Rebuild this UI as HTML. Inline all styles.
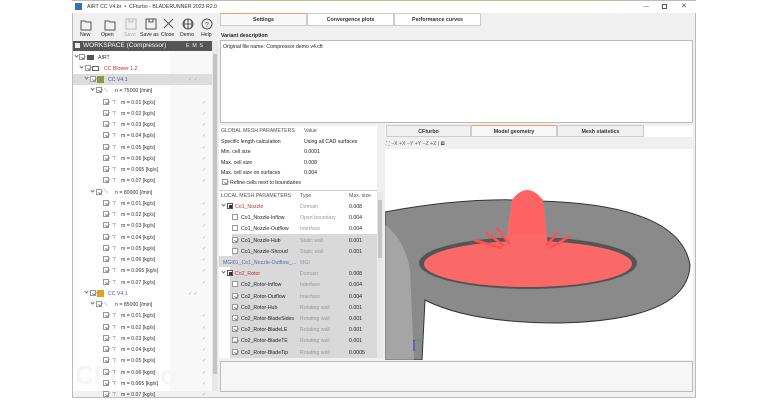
<!DOCTYPE html>
<html><head><meta charset="utf-8"><style>
*{margin:0;padding:0;box-sizing:border-box}
body{width:768px;height:402px;background:#fff;position:relative;overflow:hidden;font-family:"Liberation Sans",sans-serif;color:#222}
.a{position:absolute;white-space:nowrap}
.t{font-size:5.2px;line-height:6px}
.cb{position:absolute;width:6px;height:6px;border:0.6px solid #999;background:#fff}
.ck::after{content:"";position:absolute;left:1.5px;top:0.2px;width:1.6px;height:3px;border-right:0.6px solid #888;border-bottom:0.6px solid #888;transform:rotate(40deg)}
.chev{position:absolute;width:3px;height:3px;border-right:0.6px solid #777;border-bottom:0.6px solid #777;transform:rotate(45deg)}
.tab{position:absolute;background:#f0f0f0;border:0.6px solid #ccc;font-size:5.3px;font-weight:bold;text-align:center;line-height:12px;color:#333}
.tick{position:absolute;font-size:5px;color:#aaa}
</style></head><body>
<div class="a" style="left:72px;top:0;width:624px;height:398px;background:#f0f0f0;border:0.6px solid #bbb"></div>
<div class="a" style="left:250px;top:0;width:370px;height:1px;background:#c9b98a"></div>
<div class="a" style="left:72px;top:1px;width:624px;height:12px;background:#fff"></div>
<div class="a" style="left:75px;top:3px;width:7px;height:7px;background:#3b6fb0"></div>
<div class="a t" style="left:87px;top:4px;color:#333">AIRT CC V4.br &nbsp;•&nbsp; CFturbo - BLADERUNNER 2023 R2.0</div>
<div class="a" style="left:643px;top:4px;font-size:6px;color:#555">—</div>
<div class="a" style="left:662px;top:4px;width:5px;height:5px;border:0.7px solid #555"></div>
<div class="a" style="left:681px;top:2px;font-size:7px;color:#555">✕</div>
<svg class="a" style="left:74px;top:15px" width="145" height="18" viewBox="0 0 145 18" fill="none" stroke="#555" stroke-width="1">
<path d="M7 6h4l1 1h5v8H7z"/><path d="M31 6h4l1 1h5v8H31z"/>
<rect x="52" y="4" width="10" height="10" stroke="#bbb"/><rect x="55" y="4" width="4" height="3" stroke="#bbb"/>
<rect x="72" y="4" width="10" height="10"/><rect x="75" y="4" width="4" height="3"/>
<path d="M90 4l9 9M99 4l-9 9"/>
<circle cx="114" cy="9" r="5"/><path d="M109 9h10M114 4v10M111 5q-2 4 0 8M117 5q2 4 0 8"/>
<circle cx="133" cy="9" r="5"/><text x="131" y="12" font-size="7" fill="#555" stroke="none">?</text>
</svg>
<div class="a t" style="left:80px;top:32px">New</div>
<div class="a t" style="left:101px;top:32px">Open</div>
<div class="a t" style="left:124px;top:32px;color:#aaa">Save</div>
<div class="a t" style="left:140px;top:32px">Save as</div>
<div class="a t" style="left:161px;top:32px">Close</div>
<div class="a t" style="left:180px;top:32px">Demo</div>
<div class="a t" style="left:201px;top:32px">Help</div>
<div class="a" style="left:73px;top:41px;width:139px;height:10px;background:#555"></div>
<div class="a" style="left:75px;top:43px;width:5px;height:5px;background:#eee"></div>
<div class="a" style="left:83px;top:42px;font-size:6.5px;color:#fff">WORKSPACE (Compressor)</div>
<div class="a t" style="left:186px;top:43px;color:#eee">E &nbsp;M &nbsp;S</div>
<div class="a" style="left:73px;top:51px;width:139px;height:340px;background:#fff"></div>
<div class="a" style="left:170px;top:51px;width:42px;height:340px;background:#f8f8f8"></div>
<div class="a" style="left:212px;top:41px;width:6px;height:350px;background:#e8e8e8"></div>
<div class="a" style="left:213px;top:54px;width:4px;height:320px;background:#c4c4c4"></div>
<div class="a" style="left:73px;top:74px;width:139px;height:11px;background:#ddd"></div>
<div class="a" style="left:75px;top:360px;font-size:26px;color:#f5f5f5;font-weight:bold">CFturbo</div>
<div id="tree"></div>
<div class="tab" style="left:220px;top:13px;width:87px;height:13px;background:#f8f8f8;border-top:1.5px solid #f0a060">Settings</div>
<div class="tab" style="left:307px;top:13px;width:87px;height:13px;background:#fff">Convergence plots</div>
<div class="tab" style="left:394px;top:13px;width:87px;height:13px;background:#fff">Performance curves</div>
<div class="a t" style="left:221px;top:33px;font-weight:bold">Variant description</div>
<div class="a" style="left:220px;top:40px;width:473px;height:83px;background:#fff;border:0.7px solid #bbb"></div>
<div class="a t" style="left:223px;top:44px">Original file name: Compressor demo v4.cft</div>
<div class="a" style="left:219px;top:126px;width:158px;height:232px;background:#fff"></div>
<div class="a" style="left:377px;top:192px;width:6px;height:166px;background:#e8e8e8"></div>
<div class="a" style="left:378px;top:200px;width:4px;height:58px;background:#c4c4c4"></div>
<div class="a t" style="left:221px;top:128px;color:#555">GLOBAL MESH PARAMETERS</div><div class="a t" style="left:304px;top:128px;color:#555">Value</div>
<div class="a t" style="left:221px;top:139px">Specific length calculation</div><div class="a t" style="left:304px;top:139px">Using all CAD surfaces</div>
<div class="a t" style="left:221px;top:149px">Min. cell size</div><div class="a t" style="left:304px;top:149px">0.0001</div>
<div class="a t" style="left:221px;top:160px">Max. cell size</div><div class="a t" style="left:304px;top:160px">0.008</div>
<div class="a t" style="left:221px;top:170px">Max. cell size on surfaces</div><div class="a t" style="left:304px;top:170px">0.004</div>
<div class="cb ck" style="left:222px;top:179px"></div><div class="a t" style="left:230px;top:180px">Refine cells next to boundaries</div>
<div class="a" style="left:219px;top:190px;width:158px;height:0.6px;background:#ccc"></div>
<div class="a t" style="left:221px;top:193px;color:#555">LOCAL MESH PARAMETERS</div><div class="a t" style="left:300px;top:193px;color:#555">Type</div><div class="a t" style="left:349px;top:193px;color:#555">Max. size</div>
<div class="a" style="left:232px;top:234px;width:145px;height:22px;background:#d9d9d9"></div>
<div class="a" style="left:219px;top:256px;width:158px;height:11px;background:#d9d9d9"></div>
<div class="a" style="left:230px;top:267px;width:147px;height:91px;background:#d9d9d9"></div>
<div id="tbl"></div>
<div class="a" style="left:385px;top:126px;width:308px;height:234px;background:#fff"></div>
<div class="tab" style="left:386px;top:125px;width:85px;height:12px">CFturbo</div>
<div class="tab" style="left:471px;top:125px;width:86px;height:12px;background:#f8f8f8;border-top:1.5px solid #f0a060">Model geometry</div>
<div class="tab" style="left:557px;top:125px;width:87px;height:12px">Mesh statistics</div>
<div class="a" style="left:385px;top:137px;width:308px;height:12px;background:#f0f0f0"></div>
<div class="a t" style="left:386px;top:141px;color:#555">⛶ −X +X −Y +Y −Z +Z | ▤</div>
<svg class="a" style="left:385px;top:150px" width="308" height="210" viewBox="385 150 308 210">
<defs>
<pattern id="gm" width="2" height="2" patternUnits="userSpaceOnUse"><rect width="2" height="2" fill="#a8a8a8"/><path d="M0 0L2 2M2 0L0 2" stroke="#444" stroke-width="0.3"/></pattern>
<pattern id="rm" width="2" height="2" patternUnits="userSpaceOnUse"><rect width="2" height="2" fill="#ff7a7a"/><path d="M0 0L2 2M2 0L0 2" stroke="#f04040" stroke-width="0.3"/></pattern>
</defs>
<path d="M385 212 Q470 196 540 201 Q680 205 690 265 Q688 320 560 323 Q470 323 425 300 L422 360 L385 360 Z" fill="url(#gm)" stroke="#333" stroke-width="1"/>
<path d="M385 225 Q405 240 410 270 L414 360 L385 360Z" fill="#ccc" opacity="0.4"/>
<ellipse cx="528" cy="263" rx="109" ry="26" fill="#555"/>
<ellipse cx="528" cy="264" rx="104" ry="23" fill="url(#rm)"/>
<path d="M440 262 Q480 245 505 248 L512 200 Q527 180 543 200 L548 245 Q590 245 625 262 Q570 285 528 287 Q470 285 440 262Z" fill="url(#rm)"/>
<path d="M512 200 Q527 183 543 200 L546 235 L510 235Z" fill="#ff6262"/>
<path d="M486 232l18 14M496 228l14 16M558 232l-12 14M570 236l-20 12M474 240l28 8" stroke="#ff5050" stroke-width="2.5"/>
<path d="M413 340h10M414 340v10" stroke="#2a8" stroke-width="0.8"/><path d="M414 340v11" stroke="#22c" stroke-width="0.8"/>
</svg>
<div class="a" style="left:220px;top:361px;width:473px;height:31px;background:#f6f6f6;border:0.7px solid #bbb"></div>
<script>
var h='';
function cb(x,y,c){return '<div class="cb'+(c?' ck':'')+'" style="left:'+x+'px;top:'+y+'px"></div>';}
function ch(x,y){return '<div class="chev" style="left:'+x+'px;top:'+(y-1)+'px"></div>';}
function tx(x,y,s,c){return '<div class="a t" style="left:'+x+'px;top:'+y+'px;color:'+(c||'#333')+'">'+s+'</div>';}
var y0=54.5,rh=11.25,i=0;
function row(){return y0+rh*(i++);}
var y=row();h+=ch(75,y)+cb(79,y-1,1)+'<div class="a" style="left:87px;top:'+y+'px;width:7px;height:5px;background:#555"></div>'+tx(98,y,'AIRT');
y=row();h+=ch(80,y)+cb(85,y-1,1)+'<div class="a" style="left:92px;top:'+y+'px;width:7px;height:5px;border:0.7px solid #666"></div>'+tx(104,y,'CC Blower 1.2','#c03030');
function cc(col){var y=row();h+=ch(85,y)+cb(90,y-1,1)+'<div class="a" style="left:97px;top:'+(y-1)+'px;width:7px;height:7px;background:'+col+'"></div>'+tx(108,y,'CC V4.1','#3a5ab0')+'<div class="tick" style="left:188px;top:'+y+'px">✓ ✓</div>';}
function n(v){var y=row();h+=ch(91,y)+cb(96,y-1,1)+tx(104,y-0.5,'⟍','#555')+tx(115,y,'n = '+v+' [/min]');}
var ms=['0.01','0.02','0.03','0.04','0.05','0.06','0.065','0.07'];
function m(k){for(var j=0;j<k;j++){var y=row();h+=cb(103,y-1,1)+tx(112,y,'⊤','#555')+tx(121,y,'m = '+ms[j]+' [kg/s]')+'<div class="tick" style="left:202px;top:'+y+'px">✓</div>';}}
cc('#8a9a40');n('75000');m(8);n('80000');m(8);cc('#e0a020');n('85000');m(8);
document.getElementById('tree').innerHTML=h;
h='';
var R=[['Co1_Nozzle','Domain','0.008',0,2],['Co1_Nozzle-Inflow','Open boundary','0.004',0,1],['Co1_Nozzle-Outflow','Interface','0.004',0,1],['Co1_Nozzle-Hub','Static wall','0.001',1,1],['Co1_Nozzle-Shroud','Static wall','0.001',0,1],['MGI01_Co1_Nozzle-Outflow_...','MGI','',0,3],['Co2_Rotor','Domain','0.008',0,2],['Co2_Rotor-Inflow','Interface','0.004',0,1],['Co2_Rotor-Outflow','Interface','0.004',1,1],['Co2_Rotor-Hub','Rotating wall','0.001',1,1],['Co2_Rotor-BladeSides','Rotating wall','0.001',1,1],['Co2_Rotor-BladeLE','Rotating wall','0.001',1,1],['Co2_Rotor-BladeTE','Rotating wall','0.001',1,1],['Co2_Rotor-BladeTip','Rotating wall','0.0005',1,1]];
for(var k=0;k<R.length;k++){var r=R[k],y=204+k*11.2;
 if(r[4]==2){h+=ch(222,y)+'<div class="a" style="left:227px;top:'+(y-1)+'px;width:6px;height:6px;border:0.7px solid #555;background:#fff"><div style="margin:1px;width:3px;height:3px;background:#333"></div></div>'+tx(235,y,r[0],'#c03030');}
 else if(r[4]==3){h+=tx(223,y,r[0],'#5a6ab0');}
 else{h+=cb(232,y-1,r[3])+tx(241,y,r[0],'#222');}
 h+=tx(300,y,r[1],'#999')+tx(349,y,r[2],'#222');}
document.getElementById('tbl').innerHTML=h;
</script>
</body></html>
